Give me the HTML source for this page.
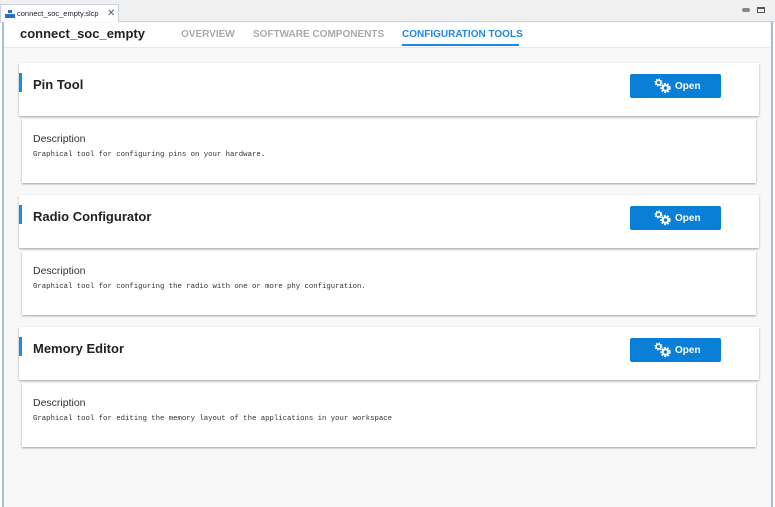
<!DOCTYPE html>
<html><head><meta charset="utf-8"><style>
*{box-sizing:border-box;margin:0;padding:0}
body{width:775px;height:507px;overflow:hidden;background:#fff;font-family:"Liberation Sans",sans-serif;position:relative}
.tabbar{position:absolute;left:0;top:0;width:775px;height:22px;background:#f0f0f0;border-bottom:1px solid #c9d3df}
.tab{position:absolute;left:0;top:4px;width:119px;height:19px;background:#fff;border:1px solid #c9d3df;border-bottom:none;font-size:7.5px;color:#222;padding:4px 0 0 16px}
.tab .ic{position:absolute;left:4px;top:5px;width:10px;height:8px}
.tab .x{position:absolute;left:106px;top:3px;font-size:10px;color:#555}
.frame{position:absolute;left:2px;top:22px;width:771px;height:485px;border-left:2px solid #a9bcd3;border-right:2px solid #a9bcd3;background:#f8f8f8}
.hdr{position:absolute;left:4px;top:23px;width:766px;height:25px;background:#fff;border-bottom:1px solid #e8e8e8}
.title{position:absolute;left:20px;top:26px;font-size:13px;font-weight:bold;color:#222}
.nav{position:absolute;top:29px;font-size:10px;font-weight:bold;color:#aaa}
.nav.on{color:#1e88e5}
.ul{position:absolute;left:402px;top:44px;width:117px;height:2px;background:#1e88e5}
.card{position:absolute;background:#fff;box-shadow:0 1px 2px rgba(0,0,0,.35);}
.h{left:19px;width:740px;height:53px}
.h .bar{position:absolute;left:0;top:10px;width:3px;height:19px;background:#1e88e5}
.h .t{position:absolute;left:14px;top:14px;font-size:13px;font-weight:bold;color:#222}
.btn{position:absolute;left:611px;top:11px;width:91px;height:24px;background:#0a7fd8;border-radius:2px;color:#fff;font-size:10px;font-weight:bold;padding:7px 0 0 45px}
.btn svg{position:absolute;left:24px;top:4px}
.d{left:22px;width:734px;height:64px}
.d .l{position:absolute;left:11px;top:14px;font-size:10.5px;color:#333}
.d .m{position:absolute;left:11px;top:32px;font-family:"Liberation Mono",monospace;font-size:7.3px;color:#333}
.wb{position:absolute;top:7px;width:8px;height:6px;border:1px solid #555}
</style></head><body>
<div class="tabbar"></div>
<div class="tab"><svg class="ic" viewBox="0 0 10 8"><rect x="3" y="0" width="4" height="3" fill="#2a6fc0"/><rect x="0" y="4" width="10" height="4" fill="#2a6fc0"/></svg>connect_soc_empty.slcp<span class="x">✕</span></div>
<div class="wb" style="left:742px;height:4px;top:8px;background:#888;border:none;border-radius:2px"></div>
<div class="wb" style="left:757px;border-top:2px solid #555"></div>
<div class="frame"></div>
<div class="hdr"></div>
<div class="title">connect_soc_empty</div>
<div class="nav" style="left:181px">OVERVIEW</div>
<div class="nav" style="left:253px">SOFTWARE COMPONENTS</div>
<div class="nav on" style="left:402px">CONFIGURATION TOOLS</div>
<div class="ul"></div>

<div class="card h" style="top:63px"><div class="bar"></div><div class="t">Pin Tool</div><div class="btn"><svg width="18" height="16" viewBox="0 0 18 16"><g fill="none" stroke="#fff"><circle cx="4.5" cy="4.5" r="2.3" stroke-width="1.5"/><circle cx="4.5" cy="4.5" r="3.3" stroke-width="1.4" stroke-dasharray="1.4 1.2"/><circle cx="11.5" cy="10" r="2.8" stroke-width="2"/><circle cx="11.5" cy="10" r="4.3" stroke-width="1.8" stroke-dasharray="1.8 1.3"/></g></svg>Open</div></div>
<div class="card d" style="top:119px"><div class="l">Description</div><div class="m">Graphical tool for configuring pins on your hardware.</div></div>

<div class="card h" style="top:195px"><div class="bar"></div><div class="t">Radio Configurator</div><div class="btn"><svg width="18" height="16" viewBox="0 0 18 16"><g fill="none" stroke="#fff"><circle cx="4.5" cy="4.5" r="2.3" stroke-width="1.5"/><circle cx="4.5" cy="4.5" r="3.3" stroke-width="1.4" stroke-dasharray="1.4 1.2"/><circle cx="11.5" cy="10" r="2.8" stroke-width="2"/><circle cx="11.5" cy="10" r="4.3" stroke-width="1.8" stroke-dasharray="1.8 1.3"/></g></svg>Open</div></div>
<div class="card d" style="top:251px"><div class="l">Description</div><div class="m">Graphical tool for configuring the radio with one or more phy configuration.</div></div>

<div class="card h" style="top:327px"><div class="bar"></div><div class="t">Memory Editor</div><div class="btn"><svg width="18" height="16" viewBox="0 0 18 16"><g fill="none" stroke="#fff"><circle cx="4.5" cy="4.5" r="2.3" stroke-width="1.5"/><circle cx="4.5" cy="4.5" r="3.3" stroke-width="1.4" stroke-dasharray="1.4 1.2"/><circle cx="11.5" cy="10" r="2.8" stroke-width="2"/><circle cx="11.5" cy="10" r="4.3" stroke-width="1.8" stroke-dasharray="1.8 1.3"/></g></svg>Open</div></div>
<div class="card d" style="top:383px"><div class="l">Description</div><div class="m">Graphical tool for editing the memory layout of the applications in your workspace</div></div>
</body></html>
